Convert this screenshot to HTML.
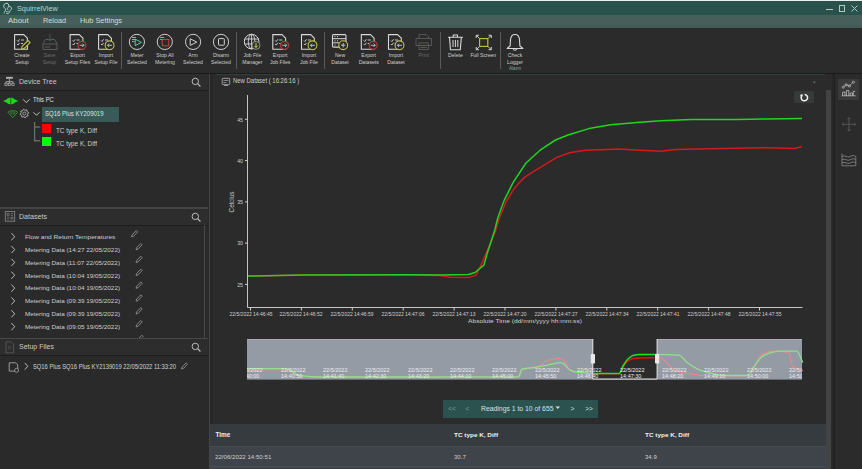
<!DOCTYPE html>
<html><head><meta charset="utf-8"><style>
html,body{margin:0;padding:0;}
body{width:862px;height:469px;overflow:hidden;position:relative;background:#2b2b2b;font-family:"Liberation Sans",sans-serif;}
</style></head><body>
<div style="position:absolute;left:0px;top:0px;width:862px;height:1px;background:#ececec;"></div>
<div style="position:absolute;left:0px;top:1px;width:862px;height:13.5px;background:#2a524d;"></div>
<div style="position:absolute;left:0px;top:14.5px;width:862px;height:13.5px;background:#475f5a;"></div>
<div style="position:absolute;left:0px;top:25px;width:862px;height:3px;background:#415c57;"></div>
<svg style="position:absolute;left:0px;top:0px;" width="16" height="16" viewBox="0 0 16 16"><path d="M7.2 3.3C5 3 3.3 4.5 3.8 6.6C4.2 8.2 6 8.6 5.6 10.2C5.3 11.4 4 11.6 4.3 13M7.4 3.4C9 4 9.3 5.8 8.2 7.2C7.6 8 7 8.8 7.8 9.6M9.6 6.6C11.2 6.6 12 7.8 11.4 9.2C10.9 10.2 9.6 10.6 9.5 11.8C9.4 13 8.2 13.8 6.6 13.6M6.3 11.5c.6.5 1.4.5 2 0" fill="none" stroke="#b9d0cb" stroke-width="1" stroke-linecap="round"/></svg>
<div style="position:absolute;left:17.3px;top:2.60px;height:12px;line-height:12px;font-size:7.2px;color:#bdd2ce;font-weight:normal;white-space:nowrap;transform:scaleX(1.013);transform-origin:0 50%;">SquirrelView</div>
<div style="position:absolute;left:825.7px;top:8.8px;width:7px;height:1px;background:#b3cac5;"></div>
<div style="position:absolute;left:838.5px;top:5.1px;width:6.5px;height:6.7px;background:transparent;border:1.1px solid #b3cac5;box-sizing:border-box;"></div>
<svg style="position:absolute;left:851px;top:5px;" width="7" height="7" viewBox="0 0 7 7"><path d="M0.5 0.5L6.5 6.5M6.5 0.5L0.5 6.5" stroke="#b3cac5" stroke-width="1"/></svg>
<div style="position:absolute;left:7.8px;top:14.80px;height:12px;line-height:12px;font-size:7.4px;color:#d2dedb;font-weight:normal;white-space:nowrap;transform:scaleX(1.065);transform-origin:0 50%;">About</div>
<div style="position:absolute;left:42.7px;top:14.80px;height:12px;line-height:12px;font-size:7.4px;color:#d2dedb;font-weight:normal;white-space:nowrap;transform:scaleX(0.981);transform-origin:0 50%;">Reload</div>
<div style="position:absolute;left:79.6px;top:14.80px;height:12px;line-height:12px;font-size:7.4px;color:#d2dedb;font-weight:normal;white-space:nowrap;transform:scaleX(0.991);transform-origin:0 50%;">Hub Settings</div>
<div style="position:absolute;left:0px;top:28px;width:862px;height:45px;background:#2b2b2b;"></div>
<div style="position:absolute;left:0px;top:72.5px;width:862px;height:1.5px;background:#1b1b1b;"></div>
<div style="position:absolute;left:121px;top:32px;width:1px;height:37px;background:#5a5a5a;"></div>
<div style="position:absolute;left:236px;top:32px;width:1px;height:37px;background:#5a5a5a;"></div>
<div style="position:absolute;left:323.5px;top:32px;width:1px;height:37px;background:#5a5a5a;"></div>
<div style="position:absolute;left:440px;top:32px;width:1px;height:37px;background:#5a5a5a;"></div>
<div style="position:absolute;left:499.5px;top:32px;width:1px;height:37px;background:#5a5a5a;"></div>
<svg style="position:absolute;left:0px;top:0px;" width="862" height="73" viewBox="0 0 862 73"><path d="M14.6 34.6h9.2l3.6 3.6v11H14.6z" fill="none" stroke="#d8d8d8" stroke-width="1.1" stroke-linejoin="round"/><path d="M17 40.5l1 1 1.6-2.2M17 44l1 1 1.6-2.2M21 40h3M21 43.5h2" fill="none" stroke="#d8d8d8" stroke-width="0.9"/><path d="M21.3 49.3l.9-3 5.8-5.8 2.1 2.1-5.8 5.8z" fill="#2b2b2b" stroke="#c2c245" stroke-width="1.1" stroke-linejoin="round"/><path d="M43 43.5l2.5-4h9l2.5 4v6h-14z M43 44h14" fill="none" stroke="#5b5b5b" stroke-width="1"/><path d="M45 47h5" stroke="#5b5b5b" stroke-width="1"/><path d="M50 34v7M47.5 38.5l2.5 2.5 2.5-2.5" fill="none" stroke="#46584f" stroke-width="1"/><path d="M70.1 34.6h9.2l3.6 3.6v11H70.1z" fill="none" stroke="#d8d8d8" stroke-width="1.1" stroke-linejoin="round"/><path d="M72.5 40.5l1 1 1.6-2.2M72.5 44l1 1 1.6-2.2M76.5 40h3M76.5 43.5h2" fill="none" stroke="#d8d8d8" stroke-width="0.9"/><circle cx="81.9" cy="45.3" r="4" fill="#2b2b2b" stroke="#c0383c" stroke-width="1.2"/><path d="M79.5 45.3h4.5M82.3 43.6l1.7 1.7-1.7 1.7" fill="none" stroke="#7fd0b0" stroke-width="1"/><path d="M98.6 34.6h9.2l3.6 3.6v11H98.6z" fill="none" stroke="#d8d8d8" stroke-width="1.1" stroke-linejoin="round"/><path d="M101 40.5l1 1 1.6-2.2M101 44l1 1 1.6-2.2M105 40h3M105 43.5h2" fill="none" stroke="#d8d8d8" stroke-width="0.9"/><circle cx="109.6" cy="45.3" r="4.4" fill="#2b2b2b" stroke="#c6c24a" stroke-width="1.1"/><path d="M112 45.3h-4.5M109.2 43.6l-1.7 1.7 1.7 1.7" fill="none" stroke="#a9c4e6" stroke-width="1"/><circle cx="136.9" cy="41.9" r="7.6" fill="none" stroke="#cdcdcd" stroke-width="1"/><circle cx="164.8" cy="41.9" r="7.6" fill="none" stroke="#cdcdcd" stroke-width="1"/><circle cx="193.1" cy="41.9" r="7.6" fill="none" stroke="#cdcdcd" stroke-width="1"/><circle cx="221" cy="41.9" r="7.6" fill="none" stroke="#cdcdcd" stroke-width="1"/><path d="M132 37.5h4M132 39.5h4M132 41.5h2.5" stroke="#d8d8d8" stroke-width="0.7"/><path d="M135.2 39.2v6.4l6.3-3.2z" fill="none" stroke="#5cc8a0" stroke-width="1" stroke-linejoin="round"/><path d="M160.2 37.5h4M160.2 39.5h2" stroke="#d8d8d8" stroke-width="0.7"/><rect x="162.3" y="39.5" width="6.5" height="6.3" fill="none" stroke="#d83a3a" stroke-width="1"/><path d="M190.2 38.8v6.6l6.6-3.3z" fill="none" stroke="#d0d0d0" stroke-width="1" stroke-linejoin="round"/><rect x="218.5" y="38.6" width="5.8" height="6.6" rx="0.6" fill="none" stroke="#d0d0d0" stroke-width="1"/><circle cx="251.6" cy="41.6" r="7.3" fill="none" stroke="#d8d8d8" stroke-width="1"/><ellipse cx="251.6" cy="41.6" rx="3.3" ry="7.3" fill="none" stroke="#d8d8d8" stroke-width="0.9"/><path d="M244.6 39h14M244.6 44h14M251.6 34.3v14.6" stroke="#d8d8d8" stroke-width="0.9"/><circle cx="256" cy="45.4" r="4" fill="#2b2b2b" stroke="#8a9a80" stroke-width="1"/><path d="M256 43v4.5M254.3 45.8l1.7 1.7 1.7-1.7" fill="none" stroke="#d4d44a" stroke-width="1"/><path d="M272.8 34.6h9.2l3.6 3.6v11H272.8z" fill="none" stroke="#d8d8d8" stroke-width="1.1" stroke-linejoin="round"/><path d="M275.2 40.5l1 1 1.6-2.2M275.2 44l1 1 1.6-2.2M279.2 40h3M279.2 43.5h2" fill="none" stroke="#d8d8d8" stroke-width="0.9"/><circle cx="284.6" cy="45.3" r="4" fill="#2b2b2b" stroke="#c0383c" stroke-width="1.2"/><path d="M282.2 45.3h4.5M285 43.6l1.7 1.7-1.7 1.7" fill="none" stroke="#7fd0b0" stroke-width="1"/><path d="M301.5 34.6h9.2l3.6 3.6v11H301.5z" fill="none" stroke="#d8d8d8" stroke-width="1.1" stroke-linejoin="round"/><path d="M303.9 40.5l1 1 1.6-2.2M303.9 44l1 1 1.6-2.2M307.9 40h3M307.9 43.5h2" fill="none" stroke="#d8d8d8" stroke-width="0.9"/><circle cx="312.5" cy="45.3" r="4.4" fill="#2b2b2b" stroke="#c6c24a" stroke-width="1.1"/><path d="M314.9 45.3h-4.5M312.1 43.6l-1.7 1.7 1.7 1.7" fill="none" stroke="#a9c4e6" stroke-width="1"/><rect x="332.5" y="34.6" width="13.5" height="12.5" rx="1" fill="none" stroke="#d8d8d8" stroke-width="1.1"/><path d="M332.5 38.7h13.5M332.5 42.8h8" stroke="#d8d8d8" stroke-width="1"/><path d="M334.5 36.7h1M337 36.7h1M334.5 40.8h1M337 40.8h1M334.5 45h1" stroke="#d8d8d8" stroke-width="1"/><circle cx="343.2" cy="45.2" r="4.4" fill="#2b2b2b" stroke="#c6c24a" stroke-width="1.1"/><path d="M343.2 43v4.4M341 45.2h4.4" stroke="#a9c4e6" stroke-width="1"/><path d="M361.3 34.6h9.2l3.6 3.6v11H361.3z" fill="none" stroke="#d8d8d8" stroke-width="1.1" stroke-linejoin="round"/><path d="M363.7 40.5l1 1 1.6-2.2M363.7 44l1 1 1.6-2.2M367.7 40h3M367.7 43.5h2" fill="none" stroke="#d8d8d8" stroke-width="0.9"/><circle cx="373.2" cy="45.3" r="4" fill="#2b2b2b" stroke="#c0383c" stroke-width="1.2"/><path d="M370.8 45.3h4.5M373.6 43.6l1.7 1.7-1.7 1.7" fill="none" stroke="#7fd0b0" stroke-width="1"/><path d="M388.5 34.6h9.2l3.6 3.6v11H388.5z" fill="none" stroke="#d8d8d8" stroke-width="1.1" stroke-linejoin="round"/><path d="M390.9 40.5l1 1 1.6-2.2M390.9 44l1 1 1.6-2.2M394.9 40h3M394.9 43.5h2" fill="none" stroke="#d8d8d8" stroke-width="0.9"/><circle cx="399.5" cy="45.3" r="4.4" fill="#2b2b2b" stroke="#c6c24a" stroke-width="1.1"/><path d="M401.9 45.3h-4.5M399.1 43.6l-1.7 1.7 1.7 1.7" fill="none" stroke="#a9c4e6" stroke-width="1"/><path d="M419 38.5v-4h7.5l2 2v2M416 38.5h15.5v7h-15.5z M419 43h9.5v6.5h-9.5z" fill="none" stroke="#565656" stroke-width="1"/><path d="M420.5 45.5h6.5M420.5 47.5h6.5" stroke="#5a6a4a" stroke-width="0.8"/><path d="M448 37.2h15M453.3 37v-2h4.2v2M449.5 37.5l1 12.2h9.8l1-12.2" fill="none" stroke="#d8d8d8" stroke-width="1.1" stroke-linejoin="round"/><path d="M453 40v7M455.4 40v7M457.8 40v7" stroke="#d8d8d8" stroke-width="1"/><path d="M476.5 35.5l2.8 2.8M491 35.5l-2.8 2.8M476.5 49.5l2.8-2.8M491 49.5l-2.8-2.8" stroke="#d8d8d8" stroke-width="0.9"/><path d="M476.2 38v-2.7h2.7M491.3 38v-2.7h-2.7M476.2 47v2.7h2.7M491.3 47v2.7h-2.7" fill="none" stroke="#d8d8d8" stroke-width="1"/><rect x="479.6" y="38.6" width="8.2" height="7.8" fill="none" stroke="#c6c24a" stroke-width="1.1"/><path d="M515 34.5c-2.6 0-4.3 2.3-4.5 5.2l-.4 6.3-3 2.5h15.8l-3-2.5-.4-6.3c-.2-2.9-1.9-5.2-4.5-5.2z" fill="none" stroke="#d8d8d8" stroke-width="1.1" stroke-linejoin="round"/><path d="M513 48.7a2 1.5 0 0 0 4 0" fill="none" stroke="#d8d8d8" stroke-width="1"/></svg>
<div style="position:absolute;left:365px;width:300px;text-align:center;top:62.70px;height:12px;line-height:12px;font-size:4.6px;color:#86a89c;font-weight:normal;white-space:nowrap;transform-origin:50% 50%;">Alarm</div>
<div style="position:absolute;left:-128px;width:300px;text-align:center;top:48.90px;height:12px;line-height:12px;font-size:5.1px;color:#cfcfcf;font-weight:normal;white-space:nowrap;transform-origin:50% 50%;">Create</div>
<div style="position:absolute;left:-128px;width:300px;text-align:center;top:55.80px;height:12px;line-height:12px;font-size:5.1px;color:#cfcfcf;font-weight:normal;white-space:nowrap;transform-origin:50% 50%;">Setup</div>
<div style="position:absolute;left:-100.5px;width:300px;text-align:center;top:48.90px;height:12px;line-height:12px;font-size:5.1px;color:#6b6b6b;font-weight:normal;white-space:nowrap;transform-origin:50% 50%;">Save</div>
<div style="position:absolute;left:-100.5px;width:300px;text-align:center;top:55.80px;height:12px;line-height:12px;font-size:5.1px;color:#6b6b6b;font-weight:normal;white-space:nowrap;transform-origin:50% 50%;">Setup</div>
<div style="position:absolute;left:-72.5px;width:300px;text-align:center;top:48.90px;height:12px;line-height:12px;font-size:5.1px;color:#cfcfcf;font-weight:normal;white-space:nowrap;transform-origin:50% 50%;">Export</div>
<div style="position:absolute;left:-72.5px;width:300px;text-align:center;top:55.80px;height:12px;line-height:12px;font-size:5.1px;color:#cfcfcf;font-weight:normal;white-space:nowrap;transform-origin:50% 50%;">Setup Files</div>
<div style="position:absolute;left:-44px;width:300px;text-align:center;top:48.90px;height:12px;line-height:12px;font-size:5.1px;color:#cfcfcf;font-weight:normal;white-space:nowrap;transform-origin:50% 50%;">Import</div>
<div style="position:absolute;left:-44px;width:300px;text-align:center;top:55.80px;height:12px;line-height:12px;font-size:5.1px;color:#cfcfcf;font-weight:normal;white-space:nowrap;transform-origin:50% 50%;">Setup File</div>
<div style="position:absolute;left:-13px;width:300px;text-align:center;top:48.90px;height:12px;line-height:12px;font-size:5.1px;color:#cfcfcf;font-weight:normal;white-space:nowrap;transform-origin:50% 50%;">Meter</div>
<div style="position:absolute;left:-13px;width:300px;text-align:center;top:55.80px;height:12px;line-height:12px;font-size:5.1px;color:#cfcfcf;font-weight:normal;white-space:nowrap;transform-origin:50% 50%;">Selected</div>
<div style="position:absolute;left:15px;width:300px;text-align:center;top:48.90px;height:12px;line-height:12px;font-size:5.1px;color:#cfcfcf;font-weight:normal;white-space:nowrap;transform-origin:50% 50%;">Stop All</div>
<div style="position:absolute;left:15px;width:300px;text-align:center;top:55.80px;height:12px;line-height:12px;font-size:5.1px;color:#cfcfcf;font-weight:normal;white-space:nowrap;transform-origin:50% 50%;">Metering</div>
<div style="position:absolute;left:43px;width:300px;text-align:center;top:48.90px;height:12px;line-height:12px;font-size:5.1px;color:#cfcfcf;font-weight:normal;white-space:nowrap;transform-origin:50% 50%;">Arm</div>
<div style="position:absolute;left:43px;width:300px;text-align:center;top:55.80px;height:12px;line-height:12px;font-size:5.1px;color:#cfcfcf;font-weight:normal;white-space:nowrap;transform-origin:50% 50%;">Selected</div>
<div style="position:absolute;left:71px;width:300px;text-align:center;top:48.90px;height:12px;line-height:12px;font-size:5.1px;color:#cfcfcf;font-weight:normal;white-space:nowrap;transform-origin:50% 50%;">Disarm</div>
<div style="position:absolute;left:71px;width:300px;text-align:center;top:55.80px;height:12px;line-height:12px;font-size:5.1px;color:#cfcfcf;font-weight:normal;white-space:nowrap;transform-origin:50% 50%;">Selected</div>
<div style="position:absolute;left:102.30000000000001px;width:300px;text-align:center;top:48.90px;height:12px;line-height:12px;font-size:5.1px;color:#cfcfcf;font-weight:normal;white-space:nowrap;transform-origin:50% 50%;">Job File</div>
<div style="position:absolute;left:102.30000000000001px;width:300px;text-align:center;top:55.80px;height:12px;line-height:12px;font-size:5.1px;color:#cfcfcf;font-weight:normal;white-space:nowrap;transform-origin:50% 50%;">Manager</div>
<div style="position:absolute;left:130.2px;width:300px;text-align:center;top:48.90px;height:12px;line-height:12px;font-size:5.1px;color:#cfcfcf;font-weight:normal;white-space:nowrap;transform-origin:50% 50%;">Export</div>
<div style="position:absolute;left:130.2px;width:300px;text-align:center;top:55.80px;height:12px;line-height:12px;font-size:5.1px;color:#cfcfcf;font-weight:normal;white-space:nowrap;transform-origin:50% 50%;">Job Files</div>
<div style="position:absolute;left:158.89999999999998px;width:300px;text-align:center;top:48.90px;height:12px;line-height:12px;font-size:5.1px;color:#cfcfcf;font-weight:normal;white-space:nowrap;transform-origin:50% 50%;">Import</div>
<div style="position:absolute;left:158.89999999999998px;width:300px;text-align:center;top:55.80px;height:12px;line-height:12px;font-size:5.1px;color:#cfcfcf;font-weight:normal;white-space:nowrap;transform-origin:50% 50%;">Job File</div>
<div style="position:absolute;left:190px;width:300px;text-align:center;top:48.90px;height:12px;line-height:12px;font-size:5.1px;color:#cfcfcf;font-weight:normal;white-space:nowrap;transform-origin:50% 50%;">New</div>
<div style="position:absolute;left:190px;width:300px;text-align:center;top:55.80px;height:12px;line-height:12px;font-size:5.1px;color:#cfcfcf;font-weight:normal;white-space:nowrap;transform-origin:50% 50%;">Dataset</div>
<div style="position:absolute;left:218.7px;width:300px;text-align:center;top:48.90px;height:12px;line-height:12px;font-size:5.1px;color:#cfcfcf;font-weight:normal;white-space:nowrap;transform-origin:50% 50%;">Export</div>
<div style="position:absolute;left:218.7px;width:300px;text-align:center;top:55.80px;height:12px;line-height:12px;font-size:5.1px;color:#cfcfcf;font-weight:normal;white-space:nowrap;transform-origin:50% 50%;">Datasets</div>
<div style="position:absolute;left:246px;width:300px;text-align:center;top:48.90px;height:12px;line-height:12px;font-size:5.1px;color:#cfcfcf;font-weight:normal;white-space:nowrap;transform-origin:50% 50%;">Import</div>
<div style="position:absolute;left:246px;width:300px;text-align:center;top:55.80px;height:12px;line-height:12px;font-size:5.1px;color:#cfcfcf;font-weight:normal;white-space:nowrap;transform-origin:50% 50%;">Dataset</div>
<div style="position:absolute;left:273.8px;width:300px;text-align:center;top:48.90px;height:12px;line-height:12px;font-size:5.1px;color:#6b6b6b;font-weight:normal;white-space:nowrap;transform-origin:50% 50%;">Print</div>
<div style="position:absolute;left:305.4px;width:300px;text-align:center;top:48.90px;height:12px;line-height:12px;font-size:5.1px;color:#cfcfcf;font-weight:normal;white-space:nowrap;transform-origin:50% 50%;">Delete</div>
<div style="position:absolute;left:333.3px;width:300px;text-align:center;top:48.90px;height:12px;line-height:12px;font-size:5.1px;color:#cfcfcf;font-weight:normal;white-space:nowrap;transform-origin:50% 50%;">Full Screen</div>
<div style="position:absolute;left:365px;width:300px;text-align:center;top:48.90px;height:12px;line-height:12px;font-size:5.1px;color:#cfcfcf;font-weight:normal;white-space:nowrap;transform-origin:50% 50%;">Check</div>
<div style="position:absolute;left:365px;width:300px;text-align:center;top:55.80px;height:12px;line-height:12px;font-size:5.1px;color:#cfcfcf;font-weight:normal;white-space:nowrap;transform-origin:50% 50%;">Logger</div>
<div style="position:absolute;left:0px;top:74px;width:209px;height:395px;background:#2a2a2a;"></div>
<div style="position:absolute;left:0px;top:74px;width:208px;height:16px;background:#2d2d2d;"></div>
<div style="position:absolute;left:0px;top:90px;width:208px;height:1px;background:#1d1d1d;"></div>
<div style="position:absolute;left:18.7px;top:76.20px;height:12px;line-height:12px;font-size:7.2px;color:#c9c9c9;font-weight:normal;white-space:nowrap;transform:scaleX(0.979);transform-origin:0 50%;">Device Tree</div>
<svg style="position:absolute;left:0px;top:74px;" width="208" height="16" viewBox="0 0 208 16"><rect x="6" y="2.9" width="6.8" height="1.8" fill="#b8b8b8"/><path d="M9.4 4.7v3M5.9 7.7h7.2M5.9 7.7v1.3M9.4 7.7v1.3M12.9 7.7v1.3" fill="none" stroke="#b8b8b8" stroke-width="0.8"/><rect x="4.9" y="9.2" width="2.3" height="2.4" fill="none" stroke="#b8b8b8" stroke-width="0.7"/><rect x="8.3" y="9.2" width="2.3" height="2.4" fill="none" stroke="#b8b8b8" stroke-width="0.7"/><rect x="11.8" y="9.2" width="2.3" height="2.4" fill="none" stroke="#b8b8b8" stroke-width="0.7"/><circle cx="195.3" cy="7.4" r="3.2" fill="none" stroke="#bdbdbd" stroke-width="1"/><path d="M197.6 9.7l2.8 2.8" stroke="#bdbdbd" stroke-width="1.1"/></svg>
<div style="position:absolute;left:0px;top:206.8px;width:208px;height:2px;background:#444444;"></div>
<div style="position:absolute;left:0px;top:209px;width:208px;height:16px;background:#2d2d2d;"></div>
<div style="position:absolute;left:0px;top:225px;width:208px;height:1px;background:#1d1d1d;"></div>
<div style="position:absolute;left:18.7px;top:211.20px;height:12px;line-height:12px;font-size:7.2px;color:#c9c9c9;font-weight:normal;white-space:nowrap;transform:scaleX(0.985);transform-origin:0 50%;">Datasets</div>
<svg style="position:absolute;left:0px;top:209px;" width="208" height="16" viewBox="0 0 208 16"><rect x="5.3" y="2.6" width="9.4" height="9.6" fill="none" stroke="#8e8e8e" stroke-width="0.8"/><path d="M7 4.6h2.2v1.8h-2.2zM10.8 4.6h2.2M10.8 6.4h2.2M7 8.2h2.2M7 10h2.2M10.8 8.2h2.2v1.8h-2.2z" fill="none" stroke="#8e8e8e" stroke-width="0.6"/><circle cx="195.3" cy="7.4" r="3.2" fill="none" stroke="#bdbdbd" stroke-width="1"/><path d="M197.6 9.7l2.8 2.8" stroke="#bdbdbd" stroke-width="1.1"/></svg>
<div style="position:absolute;left:0px;top:338px;width:208px;height:1px;background:#474747;"></div>
<div style="position:absolute;left:0px;top:338.5px;width:208px;height:16px;background:#2d2d2d;"></div>
<div style="position:absolute;left:0px;top:354.5px;width:208px;height:1px;background:#1d1d1d;"></div>
<div style="position:absolute;left:18.7px;top:340.70px;height:12px;line-height:12px;font-size:7.2px;color:#c9c9c9;font-weight:normal;white-space:nowrap;transform:scaleX(0.972);transform-origin:0 50%;">Setup Files</div>
<svg style="position:absolute;left:0px;top:338.5px;" width="208" height="16" viewBox="0 0 208 16"><path d="M6 2.8h5l2.5 2.5v8.5h-7.5z" fill="none" stroke="#575757" stroke-width="0.9"/><circle cx="9.5" cy="8.5" r="1.3" fill="none" stroke="#575757" stroke-width="0.7"/><circle cx="195.3" cy="7.4" r="3.2" fill="none" stroke="#bdbdbd" stroke-width="1"/><path d="M197.6 9.7l2.8 2.8" stroke="#bdbdbd" stroke-width="1.1"/></svg>
<svg style="position:absolute;left:0px;top:90px;" width="208" height="118" viewBox="0 0 208 118"><path d="M3 11L6.5 9.6C8 7.2 13.4 7.2 14.9 9.6L18.4 11L14.9 12.4C13.4 14.8 8 14.8 6.5 12.4z" fill="#22d622"/><path d="M10.8 7.6v6.8" stroke="#1a5a1a" stroke-width="0.9"/><path d="M23 9.3l3.3 3.3 3.3-3.3" fill="none" stroke="#d0d0d0" stroke-width="0.9"/><path d="M7.9 22.2l2.2-1.3h5.4l2.2 1.3-5 5.4z" fill="none" stroke="#2f9a2f" stroke-width="0.9"/><path d="M10.3 22.8c1.4-1.2 3.6-1.2 5 0-1.4 1.4-3.6 1.4-5 0z" fill="none" stroke="#2f9a2f" stroke-width="0.7"/><path d="M28.72 22.64 L27.64 24.14 L28.06 25.94 L26.23 26.24 L25.26 27.82 L23.76 26.74 L21.96 27.16 L21.66 25.33 L20.08 24.36 L21.16 22.86 L20.74 21.06 L22.57 20.76 L23.54 19.18 L25.04 20.26 L26.84 19.84 L27.14 21.67z" fill="none" stroke="#c8c8c8" stroke-width="0.8" stroke-linejoin="round"/><circle cx="24.4" cy="23.5" r="1.5" fill="none" stroke="#c8c8c8" stroke-width="0.7"/><path d="M33.5 22.3l3 3 3-3" fill="none" stroke="#d0d0d0" stroke-width="0.9"/><path d="M34.7 32v19.5M34.7 37h5.5M34.7 50.8h5.5" stroke="#8a8a8a" stroke-width="0.9"/></svg>
<div style="position:absolute;left:33.4px;top:93.70px;height:12px;line-height:12px;font-size:6.6px;color:#e0e0e0;font-weight:normal;white-space:nowrap;transform:scaleX(0.886);transform-origin:0 50%;">This PC</div>
<div style="position:absolute;left:42.2px;top:106.6px;width:77px;height:15.2px;background:#3a5a57;"></div>
<div style="position:absolute;left:45.2px;top:107.60px;height:12px;line-height:12px;font-size:6.4px;color:#d9e3e1;font-weight:normal;white-space:nowrap;transform:scaleX(0.941);transform-origin:0 50%;">SQ16 Plus KY209019</div>
<div style="position:absolute;left:42.2px;top:124px;width:9.2px;height:9.2px;background:#ff0000;"></div>
<div style="position:absolute;left:42.2px;top:137px;width:9.2px;height:9.2px;background:#00ff00;"></div>
<div style="position:absolute;left:55.8px;top:124.80px;height:12px;line-height:12px;font-size:6.3px;color:#cfcfcf;font-weight:normal;white-space:nowrap;transform:scaleX(1.004);transform-origin:0 50%;">TC type K, Diff</div>
<div style="position:absolute;left:55.8px;top:137.90px;height:12px;line-height:12px;font-size:6.3px;color:#cfcfcf;font-weight:normal;white-space:nowrap;transform:scaleX(1.004);transform-origin:0 50%;">TC type K, Diff</div>
<div style="position:absolute;left:25.2px;top:231.00px;height:12px;line-height:12px;font-size:6.2px;color:#cdcdcd;font-weight:normal;white-space:nowrap;transform:scaleX(1.065);transform-origin:0 50%;">Flow and Return Temperatures</div>
<div style="position:absolute;left:25.2px;top:243.85px;height:12px;line-height:12px;font-size:6.2px;color:#cdcdcd;font-weight:normal;white-space:nowrap;transform:scaleX(1.023);transform-origin:0 50%;">Metering Data (14:27 22/05/2022)</div>
<div style="position:absolute;left:25.2px;top:256.70px;height:12px;line-height:12px;font-size:6.2px;color:#cdcdcd;font-weight:normal;white-space:nowrap;transform:scaleX(1.028);transform-origin:0 50%;">Metering Data (11:07 22/05/2022)</div>
<div style="position:absolute;left:25.2px;top:269.55px;height:12px;line-height:12px;font-size:6.2px;color:#cdcdcd;font-weight:normal;white-space:nowrap;transform:scaleX(1.023);transform-origin:0 50%;">Metering Data (10:04 19/05/2022)</div>
<div style="position:absolute;left:25.2px;top:282.40px;height:12px;line-height:12px;font-size:6.2px;color:#cdcdcd;font-weight:normal;white-space:nowrap;transform:scaleX(1.023);transform-origin:0 50%;">Metering Data (10:04 19/05/2022)</div>
<div style="position:absolute;left:25.2px;top:295.25px;height:12px;line-height:12px;font-size:6.2px;color:#cdcdcd;font-weight:normal;white-space:nowrap;transform:scaleX(1.023);transform-origin:0 50%;">Metering Data (09:39 19/05/2022)</div>
<div style="position:absolute;left:25.2px;top:308.10px;height:12px;line-height:12px;font-size:6.2px;color:#cdcdcd;font-weight:normal;white-space:nowrap;transform:scaleX(1.023);transform-origin:0 50%;">Metering Data (09:39 19/05/2022)</div>
<div style="position:absolute;left:25.2px;top:320.95px;height:12px;line-height:12px;font-size:6.2px;color:#cdcdcd;font-weight:normal;white-space:nowrap;transform:scaleX(1.023);transform-origin:0 50%;">Metering Data (09:05 19/05/2022)</div>
<svg style="position:absolute;left:0px;top:0px;" width="208" height="469" viewBox="0 0 208 469"><path d="M11.4 233.10l3.3 3.6-3.3 3.6" fill="none" stroke="#c8c8c8" stroke-width="0.9"/><path d="M131.5 236.90l.6-2 4.2-4.4 1.4 1.4-4.2 4.4z" fill="none" stroke="#9a9a9a" stroke-width="0.8"/><path d="M11.4 245.95l3.3 3.6-3.3 3.6" fill="none" stroke="#c8c8c8" stroke-width="0.9"/><path d="M136.0 249.75l.6-2 4.2-4.4 1.4 1.4-4.2 4.4z" fill="none" stroke="#9a9a9a" stroke-width="0.8"/><path d="M11.4 258.80l3.3 3.6-3.3 3.6" fill="none" stroke="#c8c8c8" stroke-width="0.9"/><path d="M136.0 262.60l.6-2 4.2-4.4 1.4 1.4-4.2 4.4z" fill="none" stroke="#9a9a9a" stroke-width="0.8"/><path d="M11.4 271.65l3.3 3.6-3.3 3.6" fill="none" stroke="#c8c8c8" stroke-width="0.9"/><path d="M136.0 275.45l.6-2 4.2-4.4 1.4 1.4-4.2 4.4z" fill="none" stroke="#9a9a9a" stroke-width="0.8"/><path d="M11.4 284.50l3.3 3.6-3.3 3.6" fill="none" stroke="#c8c8c8" stroke-width="0.9"/><path d="M136.0 288.30l.6-2 4.2-4.4 1.4 1.4-4.2 4.4z" fill="none" stroke="#9a9a9a" stroke-width="0.8"/><path d="M11.4 297.35l3.3 3.6-3.3 3.6" fill="none" stroke="#c8c8c8" stroke-width="0.9"/><path d="M136.0 301.15l.6-2 4.2-4.4 1.4 1.4-4.2 4.4z" fill="none" stroke="#9a9a9a" stroke-width="0.8"/><path d="M11.4 310.20l3.3 3.6-3.3 3.6" fill="none" stroke="#c8c8c8" stroke-width="0.9"/><path d="M136.0 314.00l.6-2 4.2-4.4 1.4 1.4-4.2 4.4z" fill="none" stroke="#9a9a9a" stroke-width="0.8"/><path d="M11.4 323.05l3.3 3.6-3.3 3.6" fill="none" stroke="#c8c8c8" stroke-width="0.9"/><path d="M136.0 326.85l.6-2 4.2-4.4 1.4 1.4-4.2 4.4z" fill="none" stroke="#9a9a9a" stroke-width="0.8"/><path d="M139.2 338l2.6-2.7 1.4 1.4-.6.7" fill="none" stroke="#9a9a9a" stroke-width="0.8"/></svg>
<div style="position:absolute;left:204px;top:225px;width:1.2px;height:113px;background:#4a4a4a;"></div>
<svg style="position:absolute;left:0px;top:355px;" width="208" height="30" viewBox="0 0 208 30"><path d="M9.2 7.8h6.5l2 2v6.3h-8.5z" fill="none" stroke="#a8a8a8" stroke-width="0.9"/><circle cx="16.6" cy="15.3" r="2" fill="#2a2a2a" stroke="#a8a8a8" stroke-width="0.8"/><path d="M24.8 8l3 3.3-3 3.3" fill="none" stroke="#c8c8c8" stroke-width="0.9"/><path d="M181.5 14l.6-2 4-4.2 1.4 1.4-4 4.2z" fill="none" stroke="#9a9a9a" stroke-width="0.8"/></svg>
<div style="position:absolute;left:33px;top:361.00px;height:12px;line-height:12px;font-size:6.5px;color:#d2d2d2;font-weight:normal;white-space:nowrap;transform:scaleX(0.890);transform-origin:0 50%;">SQ16 Plus SQ16 Plus KY2139019 22/05/2022 11:33:20</div>
<div style="position:absolute;left:209px;top:74px;width:1.2px;height:395px;background:#464646;"></div>
<div style="position:absolute;left:210.2px;top:74px;width:3.5px;height:395px;background:#272727;"></div>
<div style="position:absolute;left:213px;top:74px;width:621px;height:395px;background:#2b2b2b;"></div>
<div style="position:absolute;left:216px;top:73.6px;width:608.5px;height:1.4px;background:#2f403d;"></div>
<svg style="position:absolute;left:0px;top:0px;" width="862" height="469" viewBox="0 0 862 469"><rect x="222.2" y="78.3" width="7.5" height="6.3" rx="0.8" fill="none" stroke="#a8a8a8" stroke-width="0.9"/><path d="M223.5 80.5h5M223.5 82.5h3" stroke="#a8a8a8" stroke-width="0.7"/><path d="M224 85.5h4" stroke="#a8a8a8" stroke-width="0.8"/></svg>
<div style="position:absolute;left:233px;top:74.70px;height:12px;line-height:12px;font-size:6.6px;color:#cfcfcf;font-weight:normal;white-space:nowrap;transform:scaleX(0.902);transform-origin:0 50%;">New Dataset ( 16:26:16 )</div>
<svg style="position:absolute;left:0px;top:0px;" width="862" height="469" viewBox="0 0 862 469"><path d="M247.5 95V307.5H802.5" fill="none" stroke="#c4c4c4" stroke-width="1"/><path d="M245 119.3h3" stroke="#cfcfcf" stroke-width="1"/><path d="M245 160.6h3" stroke="#cfcfcf" stroke-width="1"/><path d="M245 201.9h3" stroke="#cfcfcf" stroke-width="1"/><path d="M245 243.1h3" stroke="#cfcfcf" stroke-width="1"/><path d="M245 284.4h3" stroke="#cfcfcf" stroke-width="1"/><path d="M250.5 307.5v3" stroke="#cfcfcf" stroke-width="1"/><path d="M301.4 307.5v3" stroke="#cfcfcf" stroke-width="1"/><path d="M352.3 307.5v3" stroke="#cfcfcf" stroke-width="1"/><path d="M403.2 307.5v3" stroke="#cfcfcf" stroke-width="1"/><path d="M454.1 307.5v3" stroke="#cfcfcf" stroke-width="1"/><path d="M505.0 307.5v3" stroke="#cfcfcf" stroke-width="1"/><path d="M555.9 307.5v3" stroke="#cfcfcf" stroke-width="1"/><path d="M606.8 307.5v3" stroke="#cfcfcf" stroke-width="1"/><path d="M657.7 307.5v3" stroke="#cfcfcf" stroke-width="1"/><path d="M708.6 307.5v3" stroke="#cfcfcf" stroke-width="1"/><path d="M759.5 307.5v3" stroke="#cfcfcf" stroke-width="1"/><path d="M248.0 276.1 L304.0 275.1 L409.0 274.9 L440.0 275.4 L450.0 277.3 L468.5 277.6 L476.2 275.0 L480.7 265.8 L485.2 255.6 L495.4 231.3 L498.5 220.5 L505.6 202.7 L513.3 189.9 L518.0 184.0 L524.8 177.1 L535.0 170.7 L545.3 164.3 L556.8 157.4 L569.6 152.8 L584.9 150.2 L600.0 149.7 L619.0 149.0 L640.0 150.3 L660.8 151.2 L676.0 149.6 L721.6 148.4 L767.0 147.8 L794.5 148.4 L802.0 146.6" fill="none" stroke="#d41a1a" stroke-width="1.5" stroke-linejoin="round"/><path d="M248.0 276.1 L304.0 275.1 L409.0 274.8 L440.0 274.9 L468.5 274.5 L475.0 272.5 L483.9 265.2 L487.1 253.7 L494.8 230.0 L497.9 217.5 L504.3 200.1 L513.3 182.2 L526.0 163.0 L540.1 150.2 L555.5 140.0 L568.0 135.0 L589.0 128.6 L610.6 124.7 L640.0 122.2 L660.8 120.8 L691.2 119.5 L736.8 119.5 L767.0 119.0 L802.0 118.6" fill="none" stroke="#20d420" stroke-width="1.5" stroke-linejoin="round"/></svg>
<div style="position:absolute;right:619.1px;text-align:right;top:113.60px;height:12px;line-height:12px;font-size:5.2px;color:#d0d0d0;font-weight:normal;white-space:nowrap;transform-origin:100% 50%;">45</div>
<div style="position:absolute;right:619.1px;text-align:right;top:154.90px;height:12px;line-height:12px;font-size:5.2px;color:#d0d0d0;font-weight:normal;white-space:nowrap;transform-origin:100% 50%;">40</div>
<div style="position:absolute;right:619.1px;text-align:right;top:196.20px;height:12px;line-height:12px;font-size:5.2px;color:#d0d0d0;font-weight:normal;white-space:nowrap;transform-origin:100% 50%;">35</div>
<div style="position:absolute;right:619.1px;text-align:right;top:237.40px;height:12px;line-height:12px;font-size:5.2px;color:#d0d0d0;font-weight:normal;white-space:nowrap;transform-origin:100% 50%;">30</div>
<div style="position:absolute;right:619.1px;text-align:right;top:278.70px;height:12px;line-height:12px;font-size:5.2px;color:#d0d0d0;font-weight:normal;white-space:nowrap;transform-origin:100% 50%;">25</div>
<div style="position:absolute;left:100.5px;width:300px;text-align:center;top:308.90px;height:12px;line-height:12px;font-size:4.9px;color:#d0d0d0;font-weight:normal;white-space:nowrap;transform:scaleX(1.018);transform-origin:50% 50%;">22/5/2022 14:46:45</div>
<div style="position:absolute;left:151.39999999999998px;width:300px;text-align:center;top:308.90px;height:12px;line-height:12px;font-size:4.9px;color:#d0d0d0;font-weight:normal;white-space:nowrap;transform:scaleX(1.018);transform-origin:50% 50%;">22/5/2022 14:46:52</div>
<div style="position:absolute;left:202.3px;width:300px;text-align:center;top:308.90px;height:12px;line-height:12px;font-size:4.9px;color:#d0d0d0;font-weight:normal;white-space:nowrap;transform:scaleX(1.018);transform-origin:50% 50%;">22/5/2022 14:46:59</div>
<div style="position:absolute;left:253.2px;width:300px;text-align:center;top:308.90px;height:12px;line-height:12px;font-size:4.9px;color:#d0d0d0;font-weight:normal;white-space:nowrap;transform:scaleX(1.018);transform-origin:50% 50%;">22/5/2022 14:47:06</div>
<div style="position:absolute;left:304.1px;width:300px;text-align:center;top:308.90px;height:12px;line-height:12px;font-size:4.9px;color:#d0d0d0;font-weight:normal;white-space:nowrap;transform:scaleX(1.018);transform-origin:50% 50%;">22/5/2022 14:47:13</div>
<div style="position:absolute;left:355.0px;width:300px;text-align:center;top:308.90px;height:12px;line-height:12px;font-size:4.9px;color:#d0d0d0;font-weight:normal;white-space:nowrap;transform:scaleX(1.018);transform-origin:50% 50%;">22/5/2022 14:47:20</div>
<div style="position:absolute;left:405.9px;width:300px;text-align:center;top:308.90px;height:12px;line-height:12px;font-size:4.9px;color:#d0d0d0;font-weight:normal;white-space:nowrap;transform:scaleX(1.018);transform-origin:50% 50%;">22/5/2022 14:47:27</div>
<div style="position:absolute;left:456.79999999999995px;width:300px;text-align:center;top:308.90px;height:12px;line-height:12px;font-size:4.9px;color:#d0d0d0;font-weight:normal;white-space:nowrap;transform:scaleX(1.018);transform-origin:50% 50%;">22/5/2022 14:47:34</div>
<div style="position:absolute;left:507.70000000000005px;width:300px;text-align:center;top:308.90px;height:12px;line-height:12px;font-size:4.9px;color:#d0d0d0;font-weight:normal;white-space:nowrap;transform:scaleX(1.018);transform-origin:50% 50%;">22/5/2022 14:47:41</div>
<div style="position:absolute;left:558.5999999999999px;width:300px;text-align:center;top:308.90px;height:12px;line-height:12px;font-size:4.9px;color:#d0d0d0;font-weight:normal;white-space:nowrap;transform:scaleX(1.018);transform-origin:50% 50%;">22/5/2022 14:47:48</div>
<div style="position:absolute;left:609.5px;width:300px;text-align:center;top:308.90px;height:12px;line-height:12px;font-size:4.9px;color:#d0d0d0;font-weight:normal;white-space:nowrap;transform:scaleX(1.018);transform-origin:50% 50%;">22/5/2022 14:47:55</div>
<div style="position:absolute;left:374.6px;width:300px;text-align:center;top:315.20px;height:12px;line-height:12px;font-size:5.4px;color:#d0d0d0;font-weight:normal;white-space:nowrap;transform:scaleX(1.226);transform-origin:50% 50%;">Absolute Time (dd/mm/yyyy hh:mm:ss)</div>
<div style="position:absolute;left:211.7px;top:195.5px;width:40px;height:12px;line-height:12px;text-align:center;font-size:6.4px;color:#d0d0d0;transform:rotate(-90deg);white-space:nowrap">Celcius</div>
<div style="position:absolute;left:794.2px;top:90.8px;width:19.6px;height:12.2px;background:#363a39;border-radius:1px;"></div>
<svg style="position:absolute;left:794.2px;top:90.8px;" width="20" height="13" viewBox="0 0 20 13"><path d="M10.6 3.4A3.2 3.2 0 1 1 7.6 5" fill="none" stroke="#f2f2f2" stroke-width="1.5"/><circle cx="7.6" cy="4.5" r="1.2" fill="#f2f2f2"/></svg>
<div style="position:absolute;left:664.3px;width:300px;text-align:center;top:76.30px;height:12px;line-height:12px;font-size:5px;color:#777777;font-weight:normal;white-space:nowrap;transform-origin:50% 50%;">×</div>
<svg style="position:absolute;left:0px;top:0px;" width="862" height="469" viewBox="0 0 862 469"><rect x="247" y="339" width="555" height="40.6" fill="#959ba5"/><rect x="247" y="339" width="555" height="1" fill="#a9aeb5"/><rect x="592.8" y="339" width="64.3" height="40" fill="#2b2b2b"/><path d="M247.0 370.0 C259.67 370.00 272.33 370.00 285.0 370.0 C290.00 370.00 295.00 375.19 300.0 375.8 C306.67 376.62 313.33 377.20 320.0 377.2 C386.00 377.20 452.00 377.20 518.0 377.0 C519.17 377.00 520.33 370.61 521.5 370.0 C524.00 368.70 526.50 368.58 529.0 368.0 C532.67 367.15 536.33 367.05 540.0 365.8 C542.00 365.12 544.00 361.76 546.0 361.0 C548.00 360.24 550.00 359.86 552.0 359.5 C554.67 359.02 557.33 358.40 560.0 358.4 C561.00 358.40 562.00 358.64 563.0 359.0 C564.00 359.36 565.00 362.49 566.0 364.0 C567.33 366.02 568.67 368.78 570.0 369.5 C573.33 371.31 576.67 371.98 580.0 372.5 C584.27 373.16 588.53 373.37 592.8 373.8" fill="none" stroke="#e48a8a" stroke-width="1.2"/><path d="M247.0 368.6 C259.67 368.60 272.33 368.60 285.0 368.6 C290.00 368.60 295.00 374.97 300.0 375.6 C306.67 376.44 313.33 377.00 320.0 377.0 C386.20 377.00 452.40 377.00 518.6 376.8 C519.73 376.80 520.87 369.54 522.0 369.2 C526.27 367.91 530.53 368.16 534.8 367.5 C538.67 366.91 542.53 366.14 546.4 365.4 C551.03 364.52 555.67 362.60 560.3 362.6 C561.27 362.60 562.23 363.01 563.2 363.4 C565.33 364.26 567.47 368.74 569.6 369.8 C571.93 370.96 574.27 371.75 576.6 372.1 C582.00 372.90 587.40 373.03 592.8 373.5" fill="none" stroke="#8fe08f" stroke-width="1.3"/><path d="M657.1 355.2 C659.63 356.97 662.17 358.45 664.7 360.5 C668.13 363.27 671.57 369.40 675.0 370.6 C680.33 372.46 685.67 372.83 691.0 373.8 C694.33 374.41 697.67 375.41 701.0 375.5 C708.53 375.71 716.07 375.80 723.6 375.8 C731.73 375.80 739.87 375.80 748.0 375.8 C750.00 375.80 752.00 371.15 754.0 368.0 C756.00 364.85 758.00 357.44 760.0 356.0 C764.10 353.05 768.20 351.10 772.3 351.1 C777.73 351.10 783.17 351.33 788.6 352.3 C789.93 352.54 791.27 365.41 792.6 366.5 C796.00 369.28 799.40 369.23 802.8 370.6" fill="none" stroke="#e48a8a" stroke-width="1.2"/><path d="M657.1 354.4 C664.40 354.67 671.70 354.60 679.0 355.2 C681.67 355.42 684.33 360.59 687.0 362.5 C691.77 365.91 696.53 369.04 701.3 370.6 C708.73 373.03 716.17 375.50 723.6 375.5 C731.73 375.50 739.87 375.50 748.0 375.5 C750.00 375.50 752.00 369.08 754.0 366.5 C757.40 362.11 760.80 356.67 764.2 355.2 C769.60 352.86 775.00 351.10 780.4 351.1 C785.83 351.10 791.27 351.10 796.7 351.1 C798.73 351.10 800.77 358.70 802.8 362.5" fill="none" stroke="#8fe08f" stroke-width="1.3"/><path d="M592.8 373.8 C601.63 373.80 610.47 373.80 619.3 373.8 C620.53 373.80 621.77 368.81 623.0 367.0 C624.67 364.55 626.33 362.18 628.0 361.0 C629.67 359.82 631.33 358.72 633.0 358.5 C635.33 358.20 637.67 358.09 640.0 358.0 C645.70 357.78 651.40 357.73 657.1 357.6" fill="none" stroke="#d81818" stroke-width="1.5"/><path d="M592.8 373.6 C601.63 373.57 610.47 373.59 619.3 373.5 C620.53 373.49 621.77 368.06 623.0 366.0 C624.67 363.21 626.33 360.56 628.0 359.0 C629.67 357.44 631.33 355.91 633.0 355.5 C635.33 354.93 637.67 354.53 640.0 354.5 C645.70 354.43 651.40 354.43 657.1 354.4" fill="none" stroke="#18e818" stroke-width="1.5"/><path d="M592.8 339v40M657.1 339v40M592.8 379h64.3" fill="none" stroke="#e8e8e8" stroke-width="1"/><rect x="590.8" y="354" width="4.2" height="9.6" rx="0.8" fill="#e8e8e8"/><rect x="655" y="354" width="4.2" height="9.6" rx="0.8" fill="#e8e8e8"/></svg>
<div style="position:absolute;left:247px;top:339px;width:555px;height:41px;overflow:hidden"><div style="position:absolute;left:-8.6px;top:27.6px;line-height:6.3px;font-size:5px;color:#ececf2;white-space:nowrap;transform:scaleX(1.1);transform-origin:0 0">22/5/2022<br>14:40:00</div><div style="position:absolute;left:33.7px;top:27.6px;line-height:6.3px;font-size:5px;color:#ececf2;white-space:nowrap;transform:scaleX(1.1);transform-origin:0 0">22/5/2022<br>14:40:50</div><div style="position:absolute;left:76.1px;top:27.6px;line-height:6.3px;font-size:5px;color:#ececf2;white-space:nowrap;transform:scaleX(1.1);transform-origin:0 0">22/5/2022<br>14:41:40</div><div style="position:absolute;left:118.4px;top:27.6px;line-height:6.3px;font-size:5px;color:#ececf2;white-space:nowrap;transform:scaleX(1.1);transform-origin:0 0">22/5/2022<br>14:42:30</div><div style="position:absolute;left:160.8px;top:27.6px;line-height:6.3px;font-size:5px;color:#ececf2;white-space:nowrap;transform:scaleX(1.1);transform-origin:0 0">22/5/2022<br>14:43:20</div><div style="position:absolute;left:203.1px;top:27.6px;line-height:6.3px;font-size:5px;color:#ececf2;white-space:nowrap;transform:scaleX(1.1);transform-origin:0 0">22/5/2022<br>14:44:10</div><div style="position:absolute;left:245.4px;top:27.6px;line-height:6.3px;font-size:5px;color:#ececf2;white-space:nowrap;transform:scaleX(1.1);transform-origin:0 0">22/5/2022<br>14:45:00</div><div style="position:absolute;left:287.8px;top:27.6px;line-height:6.3px;font-size:5px;color:#ececf2;white-space:nowrap;transform:scaleX(1.1);transform-origin:0 0">22/5/2022<br>14:45:50</div><div style="position:absolute;left:330.1px;top:27.6px;line-height:6.3px;font-size:5px;color:#ececf2;white-space:nowrap;transform:scaleX(1.1);transform-origin:0 0">22/5/2022<br>14:46:40</div><div style="position:absolute;left:372.5px;top:27.6px;line-height:6.3px;font-size:5px;color:#ececf2;white-space:nowrap;transform:scaleX(1.1);transform-origin:0 0">22/5/2022<br>14:47:30</div><div style="position:absolute;left:414.8px;top:27.6px;line-height:6.3px;font-size:5px;color:#ececf2;white-space:nowrap;transform:scaleX(1.1);transform-origin:0 0">22/5/2022<br>14:48:20</div><div style="position:absolute;left:457.1px;top:27.6px;line-height:6.3px;font-size:5px;color:#ececf2;white-space:nowrap;transform:scaleX(1.1);transform-origin:0 0">22/5/2022<br>14:49:10</div><div style="position:absolute;left:499.5px;top:27.6px;line-height:6.3px;font-size:5px;color:#ececf2;white-space:nowrap;transform:scaleX(1.1);transform-origin:0 0">22/5/2022<br>14:50:00</div><div style="position:absolute;left:541.8px;top:27.6px;line-height:6.3px;font-size:5px;color:#ececf2;white-space:nowrap;transform:scaleX(1.1);transform-origin:0 0">22/5/2022<br>14:50:50</div></div>
<div style="position:absolute;left:442.5px;top:400.4px;width:155.2px;height:17.2px;background:#2b524e;"></div>
<div style="position:absolute;left:448.3px;top:402.80px;height:12px;line-height:12px;font-size:6.5px;color:#7f9a96;font-weight:normal;white-space:nowrap;transform-origin:0 50%;">&lt;&lt;</div>
<div style="position:absolute;left:465.5px;top:402.80px;height:12px;line-height:12px;font-size:6.5px;color:#7f9a96;font-weight:normal;white-space:nowrap;transform-origin:0 50%;">&lt;</div>
<div style="position:absolute;left:481px;top:402.80px;height:12px;line-height:12px;font-size:6.8px;color:#d8e3e1;font-weight:normal;white-space:nowrap;transform:scaleX(1.004);transform-origin:0 50%;">Readings 1 to 10 of 655</div>
<svg style="position:absolute;left:555px;top:406px;" width="6" height="4" viewBox="0 0 6 4"><path d="M0.5 0.5h4.5l-2.25 2.6z" fill="#e0e0e0"/></svg>
<div style="position:absolute;left:570.5px;top:402.80px;height:12px;line-height:12px;font-size:6.5px;color:#d8e3e1;font-weight:normal;white-space:nowrap;transform-origin:0 50%;">&gt;</div>
<div style="position:absolute;left:585.3px;top:402.80px;height:12px;line-height:12px;font-size:6.5px;color:#d8e3e1;font-weight:normal;white-space:nowrap;transform-origin:0 50%;">&gt;&gt;</div>
<div style="position:absolute;left:209.7px;top:423.8px;width:616.3px;height:21.8px;background:#363b40;"></div>
<div style="position:absolute;left:209.7px;top:445.6px;width:616.3px;height:23.4px;background:#3f444a;"></div>
<div style="position:absolute;left:209.7px;top:466px;width:616.3px;height:1px;background:#4a4f55;"></div>
<div style="position:absolute;left:209.7px;top:445.6px;width:616.3px;height:1px;background:#474c52;"></div>
<div style="position:absolute;left:215.4px;top:428.70px;height:12px;line-height:12px;font-size:6.4px;color:#f0f0f0;font-weight:bold;white-space:nowrap;transform-origin:0 50%;">Time</div>
<div style="position:absolute;left:453.5px;top:428.70px;height:12px;line-height:12px;font-size:6.0px;color:#f0f0f0;font-weight:bold;white-space:nowrap;transform:scaleX(1.065);transform-origin:0 50%;">TC type K, Diff</div>
<div style="position:absolute;left:644.7px;top:428.70px;height:12px;line-height:12px;font-size:6.0px;color:#f0f0f0;font-weight:bold;white-space:nowrap;transform:scaleX(1.065);transform-origin:0 50%;">TC type K, Diff</div>
<div style="position:absolute;left:215.4px;top:450.60px;height:12px;line-height:12px;font-size:6.0px;color:#cfcfcf;font-weight:normal;white-space:nowrap;transform:scaleX(1.023);transform-origin:0 50%;">22/06/2022 14:50:51</div>
<div style="position:absolute;left:453.5px;top:450.60px;height:12px;line-height:12px;font-size:6.0px;color:#cfcfcf;font-weight:normal;white-space:nowrap;transform:scaleX(1.010);transform-origin:0 50%;">30.7</div>
<div style="position:absolute;left:644.7px;top:450.60px;height:12px;line-height:12px;font-size:6.0px;color:#cfcfcf;font-weight:normal;white-space:nowrap;transform:scaleX(1.010);transform-origin:0 50%;">34.9</div>
<div style="position:absolute;left:825.9px;top:89.6px;width:4.8px;height:380px;background:#434343;"></div>
<div style="position:absolute;left:831.5px;top:74px;width:3.5px;height:395px;background:#262626;"></div>
<div style="position:absolute;left:834px;top:74px;width:1px;height:395px;background:#1f1f1f;"></div>
<div style="position:absolute;left:835px;top:74px;width:27px;height:395px;background:#2b2b2b;"></div>
<div style="position:absolute;left:838px;top:79px;width:21.2px;height:20.7px;background:#3a3a3a;"></div>
<svg style="position:absolute;left:0px;top:0px;" width="862" height="469" viewBox="0 0 862 469"><path d="M841.8 95.8h13.8M842.6 95.8v-3.6h2.4v3.6M846.4 95.8v-5.2h2.4v5.2M850.2 95.8v-2.8h2.4v2.8M853.2 95.8v-4.4h2" fill="none" stroke="#cfcfcf" stroke-width="0.7"/><path d="M843.2 87.2l3-2.4 3.2 1.2 3.4-3.6" fill="none" stroke="#cfcfcf" stroke-width="0.6"/><circle cx="843.2" cy="87.2" r="1.1" fill="none" stroke="#cfcfcf" stroke-width="0.6"/><circle cx="846.2" cy="84.8" r="1.1" fill="none" stroke="#cfcfcf" stroke-width="0.6"/><circle cx="849.4" cy="86" r="1.1" fill="none" stroke="#cfcfcf" stroke-width="0.6"/><circle cx="853.4" cy="82.2" r="1.1" fill="none" stroke="#cfcfcf" stroke-width="0.6"/><path d="M849 117.6v13.4M842.3 124.3h13.4M847.4 119.2l1.6-1.6 1.6 1.6M847.4 129.4l1.6 1.6 1.6-1.6M843.9 122.7l-1.6 1.6 1.6 1.6M854.1 122.7l1.6 1.6-1.6 1.6" fill="none" stroke="#5f5f5f" stroke-width="0.8"/><path d="M842 153.6v12.2h13.8" fill="none" stroke="#8a8a8a" stroke-width="0.8"/><path d="M842 156.5c3-2 5 1.6 8 0s4-1 5.8 0M842 159.8c3-2 5 1.6 8 0s4-1 5.8 0M842 163c3-2 5 1.6 8 0s4-1 5.8 0M855.8 156.5v9.3" fill="none" stroke="#8a8a8a" stroke-width="0.8"/></svg>
</body></html>
